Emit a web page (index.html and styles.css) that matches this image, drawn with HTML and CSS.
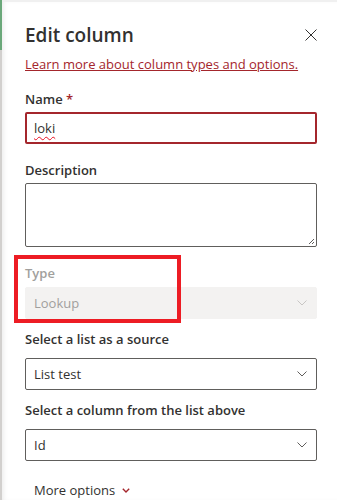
FILE: index.html
```html
<!DOCTYPE html>
<html lang="en">
<head>
  <meta charset="UTF-8" />
  <title>Edit column</title>
  <link rel="stylesheet" href="styles.css">
</head>
<body>
  <div class="page-edge"></div>

  <aside class="panel">
    <header class="panel-header">
      <h1>Edit column</h1>
      <button class="btn-close" aria-label="Close">
        <svg width="12" height="12" viewBox="0 0 12 12"><path d="M0.5 0.5 L11.5 11.5 M11.5 0.5 L0.5 11.5" stroke="#323130" stroke-width="1" fill="none"/></svg>
      </button>
    </header>

    <a href="#" class="learn-link">Learn more about column types and options.</a>

    <div class="field field-name">
      <label class="label">Name <span class="req">*</span></label>
      <div class="input input-error"><span class="spell">loki</span></div>
    </div>

    <div class="field field-desc">
      <label class="label">Description</label>
      <div class="textarea">
        <svg class="grip" width="8" height="8" viewBox="0 0 8 8"><path d="M7 2 L2 7 M7 5 L5 7" stroke="#605e5c" stroke-width="1" fill="none"/></svg>
      </div>
    </div>

    <div class="field field-type">
      <label class="label label-disabled">Type</label>
      <div class="dropdown dropdown-disabled">
        <span>Lookup</span>
        <svg class="chev" width="10" height="6" viewBox="0 0 10 6"><path d="M0.5 0.5 L5 5 L9.5 0.5" stroke="#c8c6c4" stroke-width="1" fill="none"/></svg>
      </div>
      <div class="highlight"></div>
    </div>

    <div class="field field-list">
      <label class="label">Select a list as a source</label>
      <div class="dropdown">
        <span>List test</span>
        <svg class="chev" width="10" height="6" viewBox="0 0 10 6"><path d="M0.5 0.5 L5 5 L9.5 0.5" stroke="#605e5c" stroke-width="1" fill="none"/></svg>
      </div>
    </div>

    <div class="field field-col">
      <label class="label">Select a column from the list above</label>
      <div class="dropdown">
        <span>Id</span>
        <svg class="chev" width="10" height="6" viewBox="0 0 10 6"><path d="M0.5 0.5 L5 5 L9.5 0.5" stroke="#605e5c" stroke-width="1" fill="none"/></svg>
      </div>
    </div>

    <button class="more-options">
      More options
      <svg width="8" height="5" viewBox="0 0 8 5"><path d="M0.8 0.8 L4 4 L7.2 0.8" stroke="#a4262c" stroke-width="1.4" fill="none"/></svg>
    </button>
  </aside>
</body>
</html>
```

FILE: styles.css
```css
* { margin: 0; padding: 0; box-sizing: border-box; }

html, body {
  height: 100%;
  background: #fff;
  font-family: 'Open Sans', sans-serif;
  color: #323130;
  overflow: hidden;
}

body {
  display: flex;
}

.page-edge {
  width: 2px;
  flex-shrink: 0;
  background: linear-gradient(to bottom, #6aa87a 0, #6aa87a 50px, #d2d0ce 50px);
}

.panel {
  flex-grow: 1;
  border-top: 2px solid #f0f0f0;
  padding: 19px 20px 0 23px;
  box-shadow: inset 4px 0 6px -4px rgba(0,0,0,0.12);
}

.panel-header {
  display: flex;
  align-items: center;
  justify-content: space-between;
  height: 28px;
}

.panel-header h1 {
  font-size: 19px;
  font-weight: 600;
  line-height: 28px;
  color: #323130;
}

.btn-close {
  border: none;
  background: transparent;
  width: 12px;
  height: 12px;
  display: flex;
  cursor: pointer;
}

.learn-link {
  display: block;
  margin-top: 5px;
  font-size: 13px;
  line-height: 20px;
  color: #a4262c;
  text-decoration: underline;
}

.label {
  display: block;
  font-size: 13px;
  font-weight: 600;
  line-height: 20px;
  color: #323130;
}

.label-disabled {
  color: #a19f9d;
}

.req {
  color: #a4262c;
}

.field {
  position: relative;
}

.field-name { margin-top: 15px; }
.field-name .label { margin-bottom: 3px; }

.field-desc { margin-top: 16px; }
.field-desc .label { margin-bottom: 3px; }

.field-type { margin-top: 16px; }
.field-type .label { margin-bottom: 4px; }

.field-list { margin-top: 10px; }
.field-list .label { margin-bottom: 9px; }

.field-col { margin-top: 10px; }
.field-col .label { margin-bottom: 9px; }

.input {
  height: 32px;
  border: 1px solid #605e5c;
  border-radius: 2px;
  padding: 0 8px;
  display: flex;
  align-items: center;
  font-size: 13px;
}

.input-error {
  border: 2px solid #a4262c;
  padding: 0 7px;
}

.spell {
  text-decoration: underline wavy #e81123;
  text-decoration-thickness: 1px;
  text-underline-offset: 3px;
}

.textarea {
  position: relative;
  height: 64px;
  border: 1px solid #605e5c;
  border-radius: 2px;
}

.grip {
  position: absolute;
  right: 1px;
  bottom: 1px;
}

.dropdown {
  height: 32px;
  border: 1px solid #605e5c;
  border-radius: 2px;
  padding: 0 9px 0 8px;
  display: flex;
  align-items: center;
  justify-content: space-between;
  font-size: 13px;
  color: #323130;
}

.dropdown-disabled {
  border-color: #f3f2f1;
  background: #f3f2f1;
  color: #a19f9d;
}

.highlight {
  position: absolute;
  left: -11px;
  top: -8px;
  width: 167px;
  height: 68px;
  border: 4px solid #ed1c24;
  pointer-events: none;
}

.more-options {
  margin-top: 19px;
  margin-left: 9px;
  border: none;
  background: transparent;
  font-family: 'Open Sans', sans-serif;
  font-size: 13px;
  line-height: 20px;
  color: #323130;
  display: flex;
  align-items: center;
  gap: 7px;
  cursor: pointer;
}
```
